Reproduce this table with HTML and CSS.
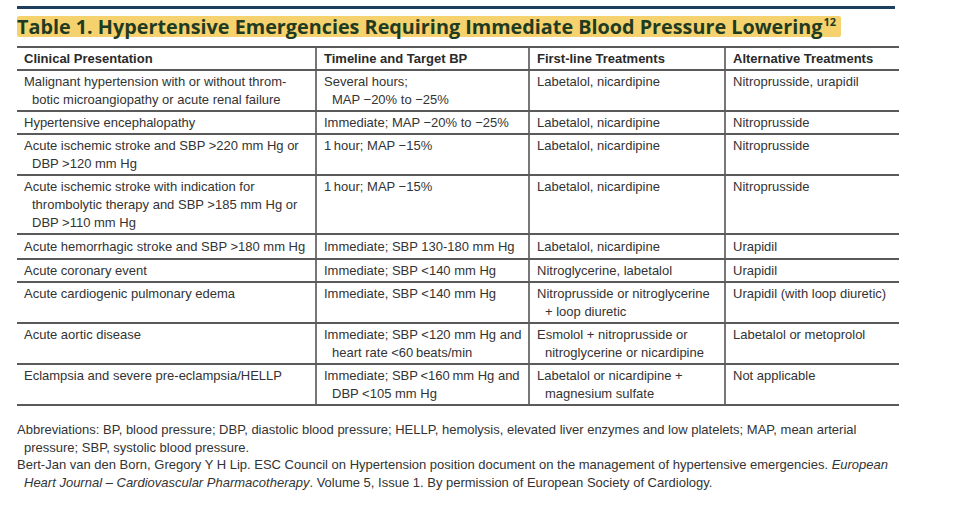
FILE: index.html
```html
<!DOCTYPE html>
<html lang="en">
<head>
<meta charset="utf-8">
<title>Table 1. Hypertensive Emergencies</title>
<link rel="stylesheet" href="styles.css">
</head>
<body>
<div class="page">
  <div class="rule"></div>
  <h1 class="title"><span class="hl">Table 1. Hypertensive Emergencies Requiring Immediate Blood Pressure Lowering<sup>12</sup></span></h1>
  <table class="tbl">
    <colgroup>
      <col class="c1"><col class="c2"><col class="c3"><col class="c4">
    </colgroup>
    <thead>
      <tr><th>Clinical Presentation</th><th>Timeline and Target BP</th><th>First-line Treatments</th><th>Alternative Treatments</th></tr>
    </thead>
    <tbody>
      <tr><td>Malignant hypertension with or without throm-<br>botic microangiopathy or acute renal failure</td><td>Several hours;<br>MAP −20% to −25%</td><td>Labetalol, nicardipine</td><td>Nitroprusside, urapidil</td></tr>
      <tr><td>Hypertensive encephalopathy</td><td>Immediate; MAP −20% to −25%</td><td>Labetalol, nicardipine</td><td>Nitroprusside</td></tr>
      <tr><td>Acute ischemic stroke and SBP &gt;220 mm Hg or<br>DBP &gt;120 mm Hg</td><td>1&#8201;hour; MAP −15%</td><td>Labetalol, nicardipine</td><td>Nitroprusside</td></tr>
      <tr><td>Acute ischemic stroke with indication for<br>thrombolytic therapy and SBP &gt;185 mm Hg or<br>DBP &gt;110 mm Hg</td><td>1&#8201;hour; MAP −15%</td><td>Labetalol, nicardipine</td><td>Nitroprusside</td></tr>
      <tr class="r5"><td>Acute hemorrhagic stroke and SBP &gt;180 mm Hg</td><td>Immediate; SBP 130-180 mm Hg</td><td>Labetalol, nicardipine</td><td>Urapidil</td></tr>
      <tr><td>Acute coronary event</td><td>Immediate; SBP &lt;140 mm Hg</td><td>Nitroglycerine, labetalol</td><td>Urapidil</td></tr>
      <tr><td>Acute cardiogenic pulmonary edema</td><td>Immediate, SBP &lt;140 mm Hg</td><td>Nitroprusside or nitroglycerine<br>+ loop diuretic</td><td>Urapidil (with loop diuretic)</td></tr>
      <tr><td>Acute aortic disease</td><td>Immediate; SBP &lt;120 mm Hg and<br>heart rate &lt;60&#8201;beats/min</td><td>Esmolol + nitroprusside or<br>nitroglycerine or nicardipine</td><td>Labetalol or metoprolol</td></tr>
      <tr><td>Eclampsia and severe pre-eclampsia/HELLP</td><td>Immediate; SBP&#8201;&lt;160&#8201;mm Hg and<br>DBP &lt;105 mm Hg</td><td>Labetalol or nicardipine +<br>magnesium sulfate</td><td>Not applicable</td></tr>
    </tbody>
  </table>
  <p class="note first">Abbreviations: BP, blood pressure; DBP, diastolic blood pressure; HELLP, hemolysis, elevated liver enzymes and low platelets; MAP, mean arterial<br>pressure; SBP, systolic blood pressure.</p>
  <p class="note">Bert-Jan van den Born, Gregory Y H Lip. ESC Council on Hypertension position document on the management of hypertensive emergencies. <i>European</i><br><i>Heart Journal – Cardiovascular Pharmacotherapy</i>. Volume 5, Issue 1. By permission of European Society of Cardiology.</p>
</div>
</body>
</html>
```

FILE: styles.css
```css
html, body {
  margin: 0;
  padding: 0;
  background: #ffffff;
}

.page {
  padding: 6px 0 0 17px;
  width: 882px;
  font-family: "Liberation Sans", Arial, sans-serif;
  color: #333333;
}

.rule {
  height: 3px;
  width: 878px;
  background: #1e3f5e;
}

.title {
  margin: 7px 0 0 0;
  font-family: "Open Sans", "DejaVu Sans", sans-serif;
  font-weight: 700;
  font-size: 19.8px;
  line-height: 21px;
  color: #1f3b21;
}

.hl {
  display: inline-block;
  background: #f5d26d;
  padding: 0 5px 0 0;
  border-radius: 2px;
}

.title sup {
  font-size: 11px;
  line-height: 0;
  vertical-align: 8px;
  margin-left: 1px;
}

.tbl {
  margin-top: 9px;
  width: 882px;
  border-collapse: collapse;
  table-layout: fixed;
  font-size: 13px;
  line-height: 18px;
}

.c1 { width: 299px; }
.c2 { width: 213px; }
.c3 { width: 196px; }
.c4 { width: 174px; }

.tbl th,
.tbl td {
  text-align: left;
  vertical-align: top;
  white-space: nowrap;
  padding: 2px 4px 1px 15px;
  text-indent: -8px;
  border-top: 2px solid #5a5a5a;
  border-bottom: 2px solid #5a5a5a;
  border-left: 2px solid #777777;
}

.tbl th:first-child,
.tbl td:first-child {
  border-left: none;
}

.tbl th {
  font-weight: 700;
  color: #2a2a2a;
}

.tbl tr.r5 td {
  padding-top: 3px;
  padding-bottom: 2px;
}

.note {
  margin: 0;
  padding-left: 7px;
  text-indent: -7px;
  font-size: 13px;
  line-height: 17.5px;
  white-space: nowrap;
  color: #333333;
}

.note.first {
  margin-top: 15px;
}
```
